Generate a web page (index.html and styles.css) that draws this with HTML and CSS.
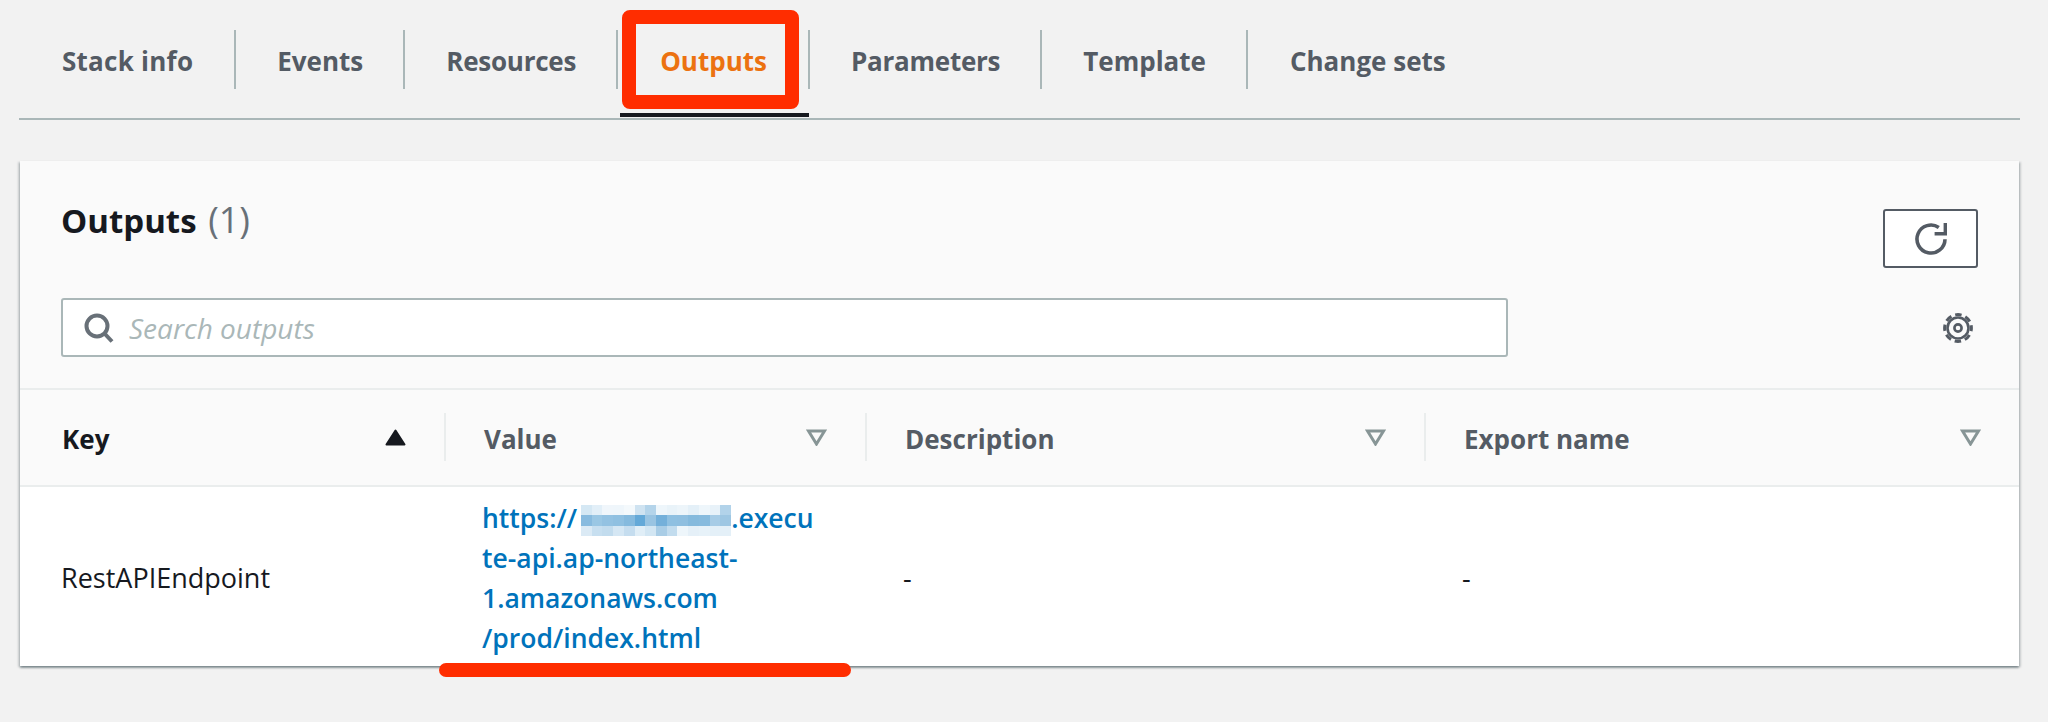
FILE: index.html
```html
<!DOCTYPE html>
<html lang="en">
<head>
<meta charset="utf-8">
<title>Outputs</title>
<link rel="stylesheet" href="styles.css">
</head>
<body>
<nav class="tabs">
  <a class="tab tab-first">Stack info</a>
  <a class="tab">Events</a>
  <a class="tab tab-tight">Resources</a>
  <a class="tab tab-active">Outputs</a>
  <a class="tab tab-tight">Parameters</a>
  <a class="tab">Template</a>
  <a class="tab tab-last">Change sets</a>
</nav>

<section class="panel">
  <header class="panel-head">
    <div class="head-row">
      <h2 class="title">Outputs <span class="count">(1)</span></h2>
      <button class="refresh" type="button" aria-label="Refresh">
        <svg class="refresh-icon" viewBox="0 0 16 16" width="32" height="32"><path d="M15 8.1A7 7 0 1 1 11.9 2.2"/><path d="M15.2 0v5.4H9.8"/></svg>
      </button>
    </div>
    <div class="search-row">
      <div class="search">
        <svg class="search-icon" viewBox="0 0 32 32" width="32" height="32"><circle cx="15" cy="14" r="10.5"/><path d="M22.5 21.5L30 29.5"/></svg>
        <span class="placeholder">Search outputs</span>
      </div>
      <svg class="gear" viewBox="0 0 32 32" width="32" height="32"><circle class="gear-teeth" cx="16" cy="16" r="13.4"/><circle class="gear-ring" cx="16" cy="16" r="10.5"/><circle class="gear-hub" cx="16" cy="16" r="3.6"/></svg>
    </div>
  </header>

  <div class="grid grid-head">
    <div class="th th-first"><span class="th-label th-key">Key</span>
      <svg class="sort" viewBox="0 0 21 17" width="21" height="17"><path class="sort-on" d="M10.5 1.5L19.5 15.5H1.5Z"/></svg></div>
    <div class="th"><span class="th-label">Value</span>
      <svg class="sort" viewBox="0 0 21 17" width="21" height="17"><path class="sort-off" d="M2.5 2H18.5L10.5 15Z"/></svg></div>
    <div class="th"><span class="th-label">Description</span>
      <svg class="sort" viewBox="0 0 21 17" width="21" height="17"><path class="sort-off" d="M2.5 2H18.5L10.5 15Z"/></svg></div>
    <div class="th"><span class="th-label">Export name</span>
      <svg class="sort" viewBox="0 0 21 17" width="21" height="17"><path class="sort-off" d="M2.5 2H18.5L10.5 15Z"/></svg></div>
  </div>

  <div class="grid grid-row">
    <div class="td td-first">RestAPIEndpoint</div>
    <div class="td"><a class="link">https://<svg class="mosaic" viewBox="0 0 14 3" width="150" height="31" preserveAspectRatio="none" shape-rendering="crispEdges">
      <rect x="0" y="0" width="14" height="3" fill="#e4f0f8"/>
      <rect x="0" y="0" width="1" height="1" fill="#d5e8f4"/><rect x="1" y="0" width="1" height="1" fill="#e2eff8"/><rect x="2" y="0" width="1" height="1" fill="#f0f6fb"/><rect x="3" y="0" width="1" height="1" fill="#eff6fb"/><rect x="4" y="0" width="1" height="1" fill="#f4f9fc"/><rect x="5" y="0" width="1" height="1" fill="#cfe3f1"/><rect x="6" y="0" width="1" height="1" fill="#b4d4ea"/><rect x="7" y="0" width="1" height="1" fill="#eef6fb"/><rect x="8" y="0" width="1" height="1" fill="#e9f3f9"/><rect x="9" y="0" width="1" height="1" fill="#edf5fa"/><rect x="10" y="0" width="1" height="1" fill="#e4f0f8"/><rect x="11" y="0" width="1" height="1" fill="#eef6fb"/><rect x="12" y="0" width="1" height="1" fill="#e8f2f9"/><rect x="13" y="0" width="1" height="1" fill="#b2d3ea"/>
      <rect x="0" y="1" width="1" height="1" fill="#88bbdf"/><rect x="1" y="1" width="1" height="1" fill="#9ac7e4"/><rect x="2" y="1" width="1" height="1" fill="#93c2e2"/><rect x="3" y="1" width="1" height="1" fill="#8fc0e1"/><rect x="4" y="1" width="1" height="1" fill="#85bade"/><rect x="5" y="1" width="1" height="1" fill="#64a9d8"/><rect x="6" y="1" width="1" height="1" fill="#99c4e2"/><rect x="7" y="1" width="1" height="1" fill="#74b0da"/><rect x="8" y="1" width="1" height="1" fill="#8fc0e1"/><rect x="9" y="1" width="1" height="1" fill="#8fbfe0"/><rect x="10" y="1" width="1" height="1" fill="#85badd"/><rect x="11" y="1" width="1" height="1" fill="#87bbde"/><rect x="12" y="1" width="1" height="1" fill="#a7cce6"/><rect x="13" y="1" width="1" height="1" fill="#9ec7e3"/>
      <rect x="0" y="2" width="1" height="1" fill="#dbeaf5"/><rect x="1" y="2" width="1" height="1" fill="#c7dff0"/><rect x="2" y="2" width="1" height="1" fill="#c2dcee"/><rect x="3" y="2" width="1" height="1" fill="#d5e7f4"/><rect x="4" y="2" width="1" height="1" fill="#c5ddef"/><rect x="5" y="2" width="1" height="1" fill="#e0eef7"/><rect x="6" y="2" width="1" height="1" fill="#d2e6f3"/><rect x="7" y="2" width="1" height="1" fill="#a9cde6"/><rect x="8" y="2" width="1" height="1" fill="#c2dcee"/><rect x="9" y="2" width="1" height="1" fill="#eef6fb"/><rect x="10" y="2" width="1" height="1" fill="#e5f0f8"/><rect x="11" y="2" width="1" height="1" fill="#e7f2f9"/><rect x="12" y="2" width="1" height="1" fill="#e4f0f8"/><rect x="13" y="2" width="1" height="1" fill="#e4f0f8"/>
    </svg>.execu<br>te-api.ap-northeast-<br>1.amazonaws.com<br>/prod/index.html</a></div>
    <div class="td">-</div>
    <div class="td">-</div>
  </div>
</section>

<div class="mark-box"></div>
<div class="mark-line"></div>
</body>
</html>
```

FILE: styles.css
```css
* { box-sizing: border-box; }

html, body { margin: 0; padding: 0; }

body {
  position: relative;
  height: 722px;
  overflow: hidden;
  background: #f2f2f2;
  color: #16191f;
  font-family: "Open Sans", "Noto Sans", sans-serif;
  font-size: 27px;
}

.tabs {
  display: flex;
  margin: 0 28px 0 19px;
  padding: 30px 0 29px;
  border-bottom: 2px solid #aab7b8;
}

.tab {
  position: relative;
  height: 59px;
  padding: 2px 40px 0 41px;
  border-right: 2px solid #aab7b8;
  color: #545b64;
  font-size: 26px;
  font-weight: 700;
  line-height: 59px;
  white-space: nowrap;
}

.tab-first { padding: 2px 41px 0 43px; letter-spacing: .25px; }

.tab-tight { letter-spacing: -.25px; }

.tab-last { border-right: 0; padding-left: 42px; }

.tab-active { padding: 2px 41px 0 42px; color: #ec7211; }

.tab-active::after {
  content: "";
  position: absolute;
  left: 2px;
  right: -1px;
  bottom: -28px;
  height: 4px;
  background: #16191f;
}

.panel {
  margin: 41px 29px 0 20px;
  background: #fff;
  box-shadow: 0 2px 2px 0 rgba(0, 28, 36, .35), 2px 1px 2px 0 rgba(0, 28, 36, .15), -2px 1px 2px 0 rgba(0, 28, 36, .15);
}

.panel-head {
  padding: 37px 41px 31px;
  background: #fafafa;
  border-bottom: 2px solid #eaeded;
}

.head-row {
  display: flex;
  justify-content: space-between;
  align-items: flex-start;
  height: 70px;
}

.title {
  margin: 0;
  font-size: 33px;
  font-weight: 700;
  line-height: 44px;
}

.count { margin-left: 3px; color: #687078; font-size: 36px; font-weight: 400; }

.refresh {
  display: flex;
  align-items: center;
  justify-content: center;
  width: 95px;
  height: 59px;
  margin-top: 11px;
  padding: 0;
  background: #fff;
  border: 2px solid #545b64;
  border-radius: 3px;
}

.refresh-icon { fill: none; stroke: #545b64; stroke-width: 1.8; }

.search-row {
  display: flex;
  justify-content: space-between;
  align-items: center;
  margin-top: 30px;
}

.search {
  display: flex;
  align-items: center;
  width: 1447px;
  height: 59px;
  padding-left: 19px;
  background: #fff;
  border: 2px solid #aab7b8;
  border-radius: 3px;
}

.search-icon { flex: none; fill: none; stroke: #687078; stroke-width: 4; }

.placeholder {
  margin-left: 15px;
  color: #aab7b8;
  font-size: 28px;
  font-style: italic;
}

.gear { flex: none; margin-right: 4px; fill: none; stroke: #545b64; }
.gear-teeth { stroke-width: 3; stroke-dasharray: 6.52 4; stroke-dashoffset: 3.26; }
.gear-ring { stroke-width: 2.6; }
.gear-hub { stroke-width: 2.6; }

.grid {
  display: grid;
  grid-template-columns: 424px 421px 559px 1fr;
}

.grid-head {
  height: 97px;
  padding-bottom: 2px;
  background: #fafafa;
  border-bottom: 2px solid #eaeded;
}

.th {
  display: flex;
  align-items: center;
  justify-content: space-between;
  height: 48px;
  margin-top: 23px;
  padding: 0 38px 0 38px;
  border-left: 2px solid #eaeded;
}

.th-first { padding-left: 42px; border-left: 0; }

.th-label {
  padding-top: 4px;
  color: #545b64;
  font-size: 26px;
  font-weight: 700;
}

.th-key { color: #16191f; }

.sort { flex: none; }
.sort-on { fill: #16191f; stroke: #16191f; stroke-width: 2; stroke-linejoin: round; }
.sort-off { fill: none; stroke: #879596; stroke-width: 3; }

.grid-row {
  padding: 11px 0 8px;
  background: #fff;
}

.td {
  display: flex;
  align-items: center;
  padding-left: 38px;
  line-height: 40px;
}

.td-first { padding-left: 41px; }

.link { color: #0073bb; font-size: 26.5px; font-weight: 600; }

.mosaic { margin: -6px 0 -6px 4px; vertical-align: middle; }

.mark-box {
  position: absolute;
  left: 622px;
  top: 10px;
  width: 177px;
  height: 99px;
  border: 14px solid #ff2d00;
  border-radius: 8px;
}

.mark-line {
  position: absolute;
  left: 439px;
  top: 663px;
  width: 412px;
  height: 14px;
  background: #ff2d00;
  border-radius: 7px;
}
```
